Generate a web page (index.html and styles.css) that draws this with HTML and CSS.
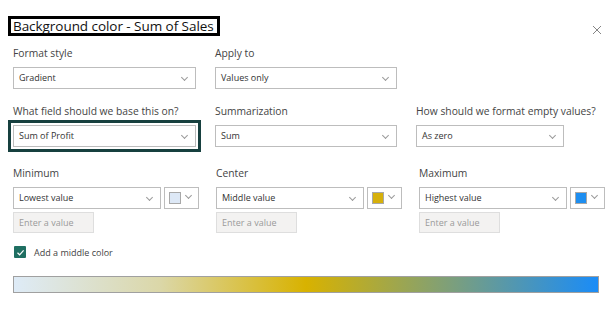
FILE: index.html
```html
<!DOCTYPE html>
<html lang="en">
<head>
  <meta charset="UTF-8">
  <meta name="viewport" content="width=device-width, initial-scale=1.0">
  <link rel="stylesheet" href="styles.css">
  <title>Background color - Sum of Sales</title>
</head>
<body>
  <div id="dialog">
    <div class="header">
      <span class="title">Background color - Sum of Sales</span>
      <button class="btnClose">
        <svg width="10" height="10" viewBox="0 0 10 10"><path d="M1 1L9 9M9 1L1 9" stroke="#777" stroke-width="0.9" fill="none"/></svg>
      </button>
    </div>

    <div class="row row1">
      <div class="field w183">
        <div class="label">Format style</div>
        <div class="select">Gradient<i class="chev"></i></div>
      </div>
      <div class="field w182">
        <div class="label">Apply to</div>
        <div class="select">Values only<i class="chev"></i></div>
      </div>
    </div>

    <div class="row row2">
      <div class="field w183">
        <div class="label">What field should we base this on?</div>
        <div class="select focused">Sum of Profit<i class="chev"></i></div>
      </div>
      <div class="field w182">
        <div class="label">Summarization</div>
        <div class="select">Sum<i class="chev"></i></div>
      </div>
      <div class="field w148">
        <div class="label">How should we format empty values?</div>
        <div class="select">As zero<i class="chev"></i></div>
      </div>
    </div>

    <div class="row row3">
      <div class="field w191">
        <div class="label">Minimum</div>
        <div class="pickRow">
          <div class="select w148">Lowest value<i class="chev"></i></div>
          <div class="colorPick"><span class="swatch" style="background:#dde8f6"></span><i class="chev"></i></div>
        </div>
        <div class="valueBox">Enter a value</div>
      </div>
      <div class="field w191">
        <div class="label">Center</div>
        <div class="pickRow">
          <div class="select w148">Middle value<i class="chev"></i></div>
          <div class="colorPick"><span class="swatch" style="background:#d6b00b"></span><i class="chev"></i></div>
        </div>
        <div class="valueBox">Enter a value</div>
      </div>
      <div class="field w191">
        <div class="label">Maximum</div>
        <div class="pickRow">
          <div class="select w148">Highest value<i class="chev"></i></div>
          <div class="colorPick"><span class="swatch" style="background:#1e8ef0"></span><i class="chev"></i></div>
        </div>
        <div class="valueBox">Enter a value</div>
      </div>
    </div>

    <div class="checkRow">
      <span class="checkbox">
        <svg width="11" height="11" viewBox="0 0 11 11"><path d="M2.5 5.8L4.6 7.8L8.6 3.4" stroke="#fff" stroke-width="1.2" fill="none"/></svg>
      </span>
      <span class="checkText">Add a middle color</span>
    </div>

    <div class="gradientBar"></div>
  </div>
</body>
</html>
```

FILE: styles.css
```css
body {
  margin: 0;
  background: #ffffff;
  font-family: "Open Sans", "Noto Sans", sans-serif;
  color: #333333;
}
#dialog {
  width: 613px;
  height: 313px;
  padding: 16px 0 0 13px;
  box-sizing: border-box;
}
.header {
  display: flex;
  justify-content: space-between;
  align-items: flex-start;
  width: 587px;
}
.title {
  margin-left: -5px;
  padding: 0 3px 0 2px;
  border: 3px solid #000000;
  font-size: 13.5px;
  line-height: 14px;
  font-weight: 400;
  color: #111111;
  letter-spacing: -0.05px;
}
.btnClose {
  width: 14px;
  height: 14px;
  margin: 5px -4px 0 0;
  padding: 2px;
  border: 0;
  background: transparent;
}
.row {
  display: flex;
  gap: 19px;
}
.field {
  flex-shrink: 0;
}
.row1 {
  margin-top: 10px;
}
.row2 {
  margin-top: 15px;
}
.row3 {
  margin-top: 19px;
  gap: 12px;
}
.w183 { width: 183px; }
.w182 { width: 182px; }
.w148 { width: 148px; }
.w191 { width: 191px; }
.label {
  font-size: 10.3px;
  line-height: 14px;
  color: #444444;
  white-space: nowrap;
  margin-bottom: 7px;
}
.select {
  position: relative;
  flex-shrink: 0;
  height: 22px;
  box-sizing: border-box;
  border: 1px solid #bdbdbd;
  padding-left: 5px;
  font-size: 9px;
  line-height: 20px;
  color: #333333;
  background: #ffffff;
}
.focused {
  outline: 3px solid #17403f;
  outline-offset: 2px;
}
.chev {
  position: absolute;
  right: 8px;
  top: 7px;
  width: 4px;
  height: 4px;
  border-right: 1px solid #9a9a9a;
  border-bottom: 1px solid #9a9a9a;
  transform: rotate(45deg);
}
.pickRow {
  display: flex;
  gap: 3px;
}
.colorPick {
  position: relative;
  flex-shrink: 0;
  width: 35px;
  height: 22px;
  box-sizing: border-box;
  border: 1px solid #bdbdbd;
}
.colorPick .chev {
  right: 7px;
  top: 5px;
}
.swatch {
  position: absolute;
  left: 4px;
  top: 4px;
  width: 12px;
  height: 12px;
  box-sizing: border-box;
  border: 1px solid #a8a8a8;
}
.valueBox {
  width: 81px;
  height: 21px;
  margin-top: 3px;
  box-sizing: border-box;
  border: 1px solid #dedede;
  background: #f3f2f1;
  padding-left: 5px;
  font-size: 9px;
  line-height: 19px;
  color: #9a9a9a;
}
.checkRow {
  display: flex;
  align-items: center;
  margin-top: 13px;
  height: 12px;
}
.checkbox {
  display: inline-block;
  width: 12px;
  height: 12px;
  margin-left: 1px;
  border-radius: 1px;
  background: #1f6f62;
}
.checkbox svg {
  display: block;
  margin: 0.5px;
}
.checkText {
  margin-left: 8px;
  font-size: 9px;
  color: #444444;
}
.gradientBar {
  margin-top: 18px;
  width: 586px;
  height: 17px;
  box-sizing: border-box;
  border: 1px solid #a0a0a0;
  background: linear-gradient(to right, #deebf7 0%, #dbd7a8 25%, #d8b200 50%, #7c9f7c 75%, #1a8cf7 100%);
}
```
